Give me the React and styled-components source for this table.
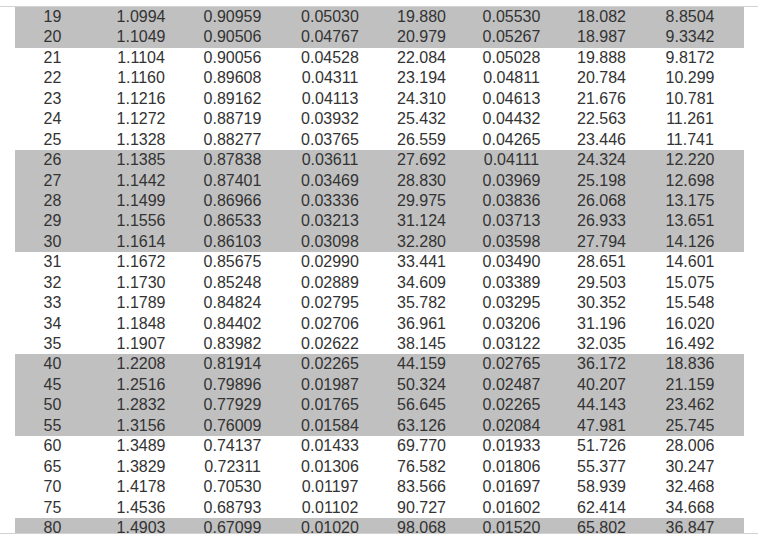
import React from 'react'
import styled, { createGlobalStyle } from 'styled-components'

const GlobalStyle = createGlobalStyle`
  html, body {
    margin: 0;
    padding: 0;
    background: #fff;
  }
`

const columns = [76, 101, 82, 113, 70, 110, 70, 107]

const rows = [
  ['19', '1.0994', '0.90959', '0.05030', '19.880', '0.05530', '18.082', '8.8504'],
  ['20', '1.1049', '0.90506', '0.04767', '20.979', '0.05267', '18.987', '9.3342'],
  ['21', '1.1104', '0.90056', '0.04528', '22.084', '0.05028', '19.888', '9.8172'],
  ['22', '1.1160', '0.89608', '0.04311', '23.194', '0.04811', '20.784', '10.299'],
  ['23', '1.1216', '0.89162', '0.04113', '24.310', '0.04613', '21.676', '10.781'],
  ['24', '1.1272', '0.88719', '0.03932', '25.432', '0.04432', '22.563', '11.261'],
  ['25', '1.1328', '0.88277', '0.03765', '26.559', '0.04265', '23.446', '11.741'],
  ['26', '1.1385', '0.87838', '0.03611', '27.692', '0.04111', '24.324', '12.220'],
  ['27', '1.1442', '0.87401', '0.03469', '28.830', '0.03969', '25.198', '12.698'],
  ['28', '1.1499', '0.86966', '0.03336', '29.975', '0.03836', '26.068', '13.175'],
  ['29', '1.1556', '0.86533', '0.03213', '31.124', '0.03713', '26.933', '13.651'],
  ['30', '1.1614', '0.86103', '0.03098', '32.280', '0.03598', '27.794', '14.126'],
  ['31', '1.1672', '0.85675', '0.02990', '33.441', '0.03490', '28.651', '14.601'],
  ['32', '1.1730', '0.85248', '0.02889', '34.609', '0.03389', '29.503', '15.075'],
  ['33', '1.1789', '0.84824', '0.02795', '35.782', '0.03295', '30.352', '15.548'],
  ['34', '1.1848', '0.84402', '0.02706', '36.961', '0.03206', '31.196', '16.020'],
  ['35', '1.1907', '0.83982', '0.02622', '38.145', '0.03122', '32.035', '16.492'],
  ['40', '1.2208', '0.81914', '0.02265', '44.159', '0.02765', '36.172', '18.836'],
  ['45', '1.2516', '0.79896', '0.01987', '50.324', '0.02487', '40.207', '21.159'],
  ['50', '1.2832', '0.77929', '0.01765', '56.645', '0.02265', '44.143', '23.462'],
  ['55', '1.3156', '0.76009', '0.01584', '63.126', '0.02084', '47.981', '25.745'],
  ['60', '1.3489', '0.74137', '0.01433', '69.770', '0.01933', '51.726', '28.006'],
  ['65', '1.3829', '0.72311', '0.01306', '76.582', '0.01806', '55.377', '30.247'],
  ['70', '1.4178', '0.70530', '0.01197', '83.566', '0.01697', '58.939', '32.468'],
  ['75', '1.4536', '0.68793', '0.01102', '90.727', '0.01602', '62.414', '34.668'],
  ['80', '1.4903', '0.67099', '0.01020', '98.068', '0.01520', '65.802', '36.847'],
]

// bands of five: 16-20 grey, 21-25 white, ... then 40-55 grey, 60-75 white, 80 grey
const isShaded = (n) => {
  if (n <= 35) return Math.floor((n - 16) / 5) % 2 === 0
  return Math.floor((n - 40) / 20) % 2 === 0
}

const App = () => {
  return (
    <>
      <GlobalStyle />
      <ScrollBox>
        <Table>
          <colgroup>
            {columns.map((w, i) => (
              <Col key={i} $w={w} />
            ))}
          </colgroup>
          <tbody>
            {rows.map((r) => (
              <Row key={r[0]} $shaded={isShaded(Number(r[0]))}>
                {r.map((v, i) => (
                  <Cell key={i}>{v}</Cell>
                ))}
              </Row>
            ))}
          </tbody>
        </Table>
      </ScrollBox>
    </>
  )
}

const ScrollBox = styled.div`
    margin-top: 6px;
    height: 526px;
    overflow: hidden;
    border-top: 1px solid #d2d2d2;
    border-bottom: 1px solid #d2d2d2;
`

const Table = styled.table`
    width: 729px;
    margin: 0 auto;
    border-collapse: collapse;
    table-layout: fixed;
    font-family: "Liberation Sans", Arial, sans-serif;
    font-size: 16px;
    color: #333;
`

const Col = styled.col`
    width: ${(p) => p.$w}px;
`

const Row = styled.tr`
    height: 20.44px;
    background: ${(p) => (p.$shaded ? '#c0c0c0' : 'transparent')};
`

const Cell = styled.td`
    padding: 1px;
    text-align: center;
    line-height: 18.44px;
`

export default App
